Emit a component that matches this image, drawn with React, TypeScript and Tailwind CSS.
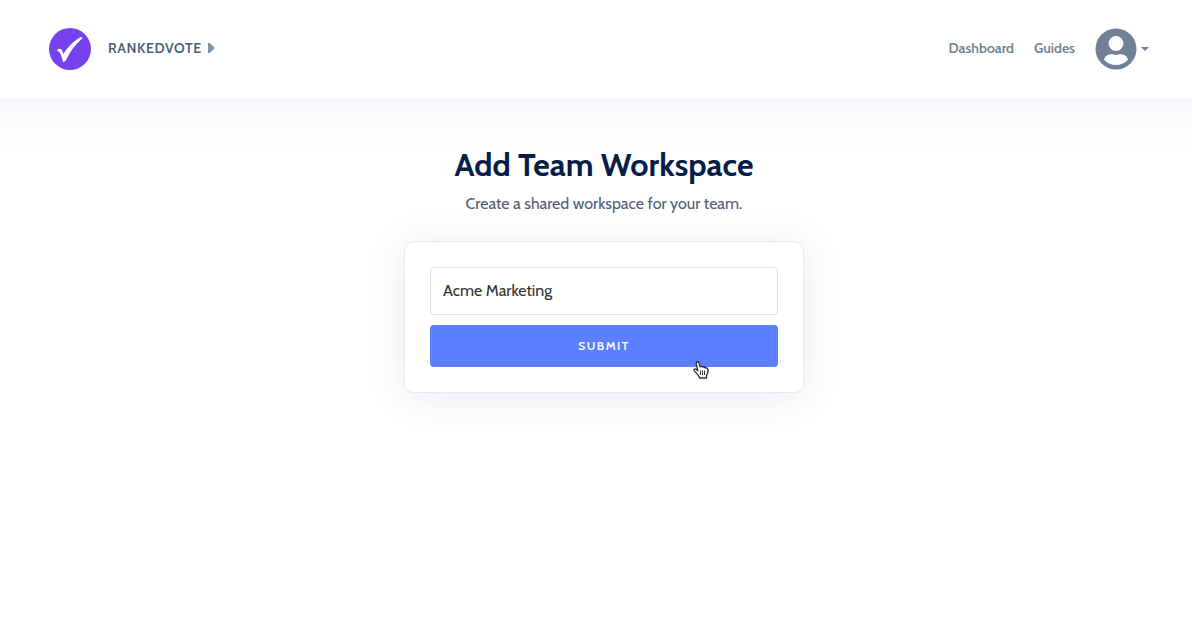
import { useState } from "react"

const NAV_LINKS = [
  { label: "Dashboard", href: "#dashboard" },
  { label: "Guides", href: "#guides" },
]

function LogoMark() {
  return (
    <svg viewBox="0 0 42 42" className="size-[42px]" aria-hidden="true">
      <circle cx="21" cy="21" r="21" fill="#7641ee" />
      <path
        d="M7.800 22.400c1.300-1.600 3.100-2 4.300-1.100 1.100.9 1.700 2.900 2.200 4.700C18.600 19.300 24.500 13 31.900 9c.9-.4 2.100.7 1.300 1.500-6.900 6.200-12.200 13-16.100 21.400-.5 1-1.900 1.900-3.100 2.100-.7-2.900-1.500-5.900-2.700-8.500-.6-1.300-1.900-2.300-3.500-3.100Z"
        fill="#fff"
      />
    </svg>
  )
}

function Avatar() {
  return (
    <svg viewBox="0 0 42 42" className="size-[42px]" aria-hidden="true">
      <circle cx="21" cy="21" r="20.500" fill="#718096" />
      <circle cx="21" cy="15.500" r="7.400" fill="#fff" />
      <path
        d="M9 31.500c1.200-3.600 3.900-5.200 7-5.200 1.700 0 3 .7 5 .7s3.300-.7 5-.7c3.100 0 5.800 1.600 7 5.200-3 3.600-7.200 5.500-12 5.500s-9-1.900-12-5.500Z"
        fill="#fff"
      />
    </svg>
  )
}

function HandPointer() {
  return (
    <svg
      viewBox="0 0 16 18"
      className="pointer-events-none absolute right-[69px] -bottom-3 h-[18px] w-4"
      aria-hidden="true"
    >
      <path
        d="M4.800 9.800 3.400 3.300C3.100 1.900 3.500 1 4.300.8c1-.2 1.600.5 1.900 1.600l.9 3.300c.9-.6 2-.4 2.500.4.900-.5 1.900-.2 2.400.7 1.700-.4 2.900.5 3 2.200.1 2.400-.4 3.900-1.500 5.700v2.300H6.700c-.5-1.700-1.500-2.800-2.700-4.100C2.800 11.600 1.700 10.700 1 9.500.6 8.400 1.700 7.600 2.800 8.100c.8.300 1.400.9 2 1.700Z"
        fill="#fff"
        stroke="#333"
        strokeWidth="1.400"
        strokeLinejoin="round"
      />
      <path d="M7.500 9.500V14M9.500 9.500V14M11.500 9.500V14" stroke="#333" strokeWidth="1" />
    </svg>
  )
}

export default function App() {
  const [name, setName] = useState("Acme Marketing")

  return (
    <div className="min-h-screen bg-white font-['Cabin','Lato',sans-serif]">
      <header className="flex items-center justify-between bg-white py-7 pr-[43px] pl-[49px]">
        <a href="#home" className="flex items-center text-sm font-semibold text-[#4a5b78]">
          <LogoMark />
          <span className="ml-[17px] pb-0.5 tracking-[0.04em]">RANKEDVOTE</span>
          <svg viewBox="0 0 7 10" className="mb-0.5 ml-1.5 h-2.5 w-[7px]" aria-hidden="true">
            <path d="M0 0h1.500L7 5l-5.500 5H0Z" fill="#8492a8" />
          </svg>
        </a>
        <nav className="flex items-center gap-5" aria-label="Main">
          {NAV_LINKS.map((link) => (
            <a key={link.label} href={link.href} className="pb-0.5 text-sm font-semibold text-[#718096]">
              {link.label}
            </a>
          ))}
          <button type="button" className="flex items-center gap-1" aria-label="Account menu">
            <Avatar />
            <svg viewBox="0 0 8 4" className="h-1 w-2" aria-hidden="true">
              <path d="M0 0h8L4 4Z" fill="#718096" />
            </svg>
          </button>
        </nav>
      </header>

      <main className="bg-linear-to-b from-[#f7f8fc] to-white to-[52px] pt-[46px] pr-4 pb-16 pl-8">
        <div className="mx-auto max-w-[400px]">
          <h1 className="text-center text-[32px] leading-[42px] font-bold text-[#061e47]">Add Team Workspace</h1>
          <p className="mt-1.5 text-center text-base leading-6 text-[#4f5e7b]">Create a shared workspace for your team.</p>

          <form
            onSubmit={(e) => e.preventDefault()}
            className="mt-[25px] rounded-[10px] border border-[#e6e9f0] bg-white p-[25px] shadow-[0_4px_40px_rgba(31,45,90,0.1)]"
          >
            <input
              type="text"
              aria-label="Workspace name"
              value={name}
              onChange={(e) => setName(e.target.value)}
              className="block h-12 w-full rounded-[4px] border border-[#e0e1e5] bg-white px-3 pb-0.5 text-base text-[#333] outline-none"
            />
            <div className="relative mt-2.5">
              <button
                type="submit"
                className="h-[42px] w-full cursor-pointer rounded-[4px] bg-[#5b7fff] text-xs font-semibold tracking-[0.125em] text-white"
              >
                SUBMIT
              </button>
              <HandPointer />
            </div>
          </form>
        </div>
      </main>
    </div>
  )
}
